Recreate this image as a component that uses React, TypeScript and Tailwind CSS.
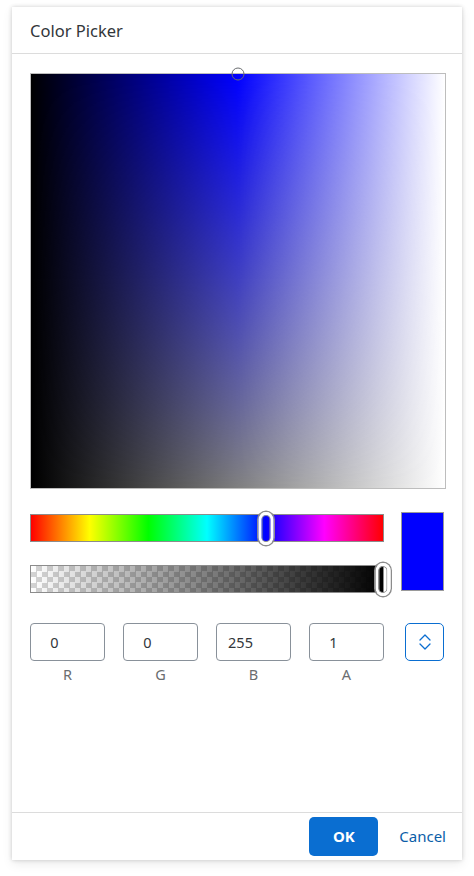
import { useState } from "react";

const font = { fontFamily: '"Noto Sans", "Liberation Sans", Arial, sans-serif' };

function Handle({ left }: { left: number }) {
  // pill-shaped slider thumb, color shows through
  return (
    <div
      className="absolute top-0 h-[33px] w-[15px] -translate-x-1/2 rounded-full border-[3px] border-white shadow-[0_0_0_1.5px_#8c8c8c,inset_0_0_0_1px_#8c8c8c]"
      style={{ left }}
    />
  );
}

export default function App() {
  const [rgba] = useState({ r: 0, g: 0, b: 255, a: 1 });

  const fields: [string, string][] = [
    ["R", String(rgba.r)],
    ["G", String(rgba.g)],
    ["B", String(rgba.b)],
    ["A", String(rgba.a)],
  ];

  return (
    <div className="h-[876px] w-full bg-white pl-[12px] pt-[7px]" style={font}>
      <div className="flex h-[853px] w-[450px] flex-col bg-white shadow-[0_0_4px_rgba(0,0,0,0.18),0_4px_10px_rgba(0,0,0,0.08)]">
        {/* Header */}
        <div className="flex h-[47px] shrink-0 items-center border-b border-[#dcdcdc] px-[18px] pt-[3px]">
          <h1 className="text-[16.5px] text-[#32363a]">Color Picker</h1>
        </div>

        {/* Body */}
        <div className="flex-1 px-[18px] pt-[19px]">
          {/* Saturation / lightness square */}
          <div className="relative h-[416px] w-[416px] border border-[#bdbdbd]">
            <div className="absolute inset-0 bg-[linear-gradient(to_right,#000,#808080,#fff)]" />
            <div className="absolute inset-0 bg-[linear-gradient(to_right,#000,#00f,#fff)] [mask-image:linear-gradient(to_bottom,#000,transparent)]" />
            <div className="absolute left-[207px] top-0 h-[13px] w-[13px] -translate-x-1/2 -translate-y-1/2 rounded-full border-[1.5px] border-[#6a6d70]" />
          </div>

          {/* Sliders + swatch */}
          <div className="mt-[23px] flex">
            <div className="flex w-[354px] flex-col gap-[18px]">
              <div className="relative h-[33px]">
                <div className="absolute inset-x-0 top-[2px] h-[28px] border border-[#8c8c8c] bg-[linear-gradient(to_right,#f00,#ff0,#0f0,#0ff,#00f,#f0f,#f00)]" />
                <Handle left={236} />
              </div>
              <div className="relative h-[33px]">
                <div className="absolute inset-x-0 top-[2px] h-[28px] border border-[#8c8c8c] bg-white bg-[conic-gradient(#d4d4d4_25%,#fff_0_50%,#d4d4d4_0_75%,#fff_0)] bg-[length:11px_11px]">
                  <div className="h-full w-full bg-[linear-gradient(to_right,transparent,#000)]" />
                </div>
                <Handle left={353} />
              </div>
            </div>
            <div className="ml-[17px] h-[79px] w-[43px] border border-[#9a9a9a] bg-[#0000ff]" />
          </div>

          {/* RGBA inputs */}
          <div className="mt-[27px] flex items-start">
            <div className="flex gap-[18px]">
              {fields.map(([label, value]) => (
                <div key={label} className="flex w-[75px] flex-col items-center">
                  <input
                    readOnly
                    value={value}
                    className="h-[38px] w-[75px] rounded-[4px] border border-[#89919a] bg-white pr-[26px] text-center text-[14.5px] text-[#32363a] outline-none"
                    style={font}
                  />
                  <span className="mt-[3px] text-[14.5px] text-[#6a6d70]">{label}</span>
                </div>
              ))}
            </div>
            <button className="ml-[21px] flex h-[38px] w-[39px] items-center justify-center rounded-[5px] border border-[#0a6ed1] bg-white">
              <svg width="14" height="18" viewBox="0 0 14 18" fill="none" stroke="#0a6ed1" strokeWidth="1.3" strokeLinecap="round" strokeLinejoin="round">
                <path d="M2 7 L7 2 L12 7" />
                <path d="M2 11 L7 16 L12 11" />
              </svg>
            </button>
          </div>
        </div>

        {/* Footer */}
        <div className="flex h-[48px] shrink-0 items-center justify-end gap-[21px] border-t border-[#dcdcdc] pr-[16px]">
          <button className="h-[39px] w-[69px] rounded-[5px] bg-[#0a6ed1] text-[15px] font-bold text-white">OK</button>
          <button className="text-[15px] text-[#0a5ea8]">Cancel</button>
        </div>
      </div>
    </div>
  );
}
